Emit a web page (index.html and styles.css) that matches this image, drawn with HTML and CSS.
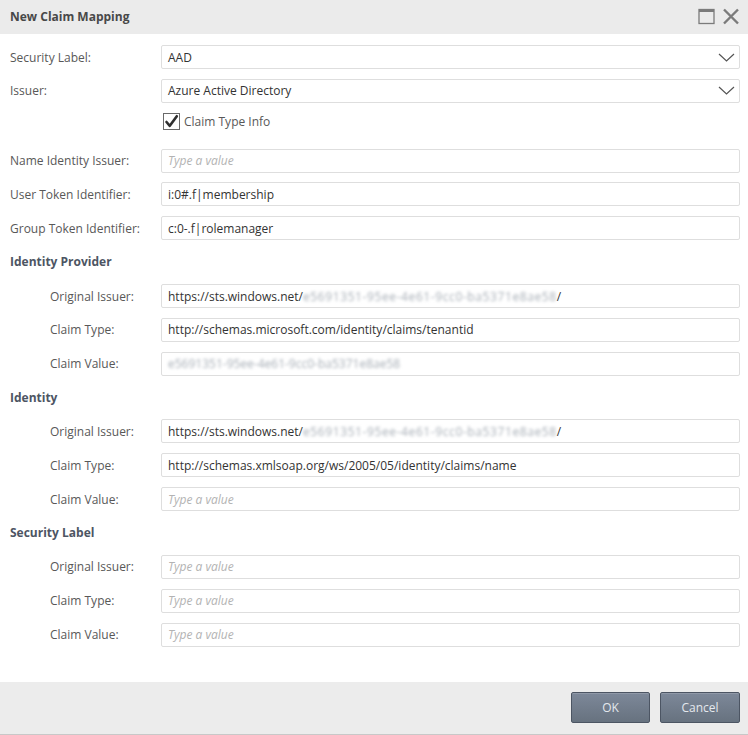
FILE: index.html
```html
<!DOCTYPE html>
<html lang="en">
<head>
<meta charset="utf-8">
<title>New Claim Mapping</title>
<link rel="stylesheet" href="styles.css">
</head>
<body>
<div class="dialog">
  <header class="titlebar">
    <span class="title">New Claim Mapping</span>
    <div class="tools">
      <svg class="icon-max" width="17" height="17" viewBox="0 0 17 17"><rect x="1" y="1.5" width="15" height="14" fill="none" stroke="#7b7b7b" stroke-width="1.3"/><rect x="1" y="1" width="15" height="3" fill="#7b7b7b"/></svg>
      <svg class="icon-close" width="18" height="17" viewBox="0 0 18 17"><path d="M2 1.5 L16 15.5 M16 1.5 L2 15.5" stroke="#7b7b7b" stroke-width="2.4" fill="none"/></svg>
    </div>
  </header>

  <main class="form">
    <div class="row">
      <span class="label">Security Label:</span>
      <div class="field select"><span class="val">AAD</span><svg class="chev" width="17" height="9" viewBox="0 0 17 9"><path d="M1 1 L8.5 8 L16 1" stroke="#555" stroke-width="1.2" fill="none"/></svg></div>
    </div>
    <div class="row">
      <span class="label">Issuer:</span>
      <div class="field select"><span class="val">Azure Active Directory</span><svg class="chev" width="17" height="9" viewBox="0 0 17 9"><path d="M1 1 L8.5 8 L16 1" stroke="#555" stroke-width="1.2" fill="none"/></svg></div>
    </div>
    <div class="row row-check">
      <span class="label"></span>
      <div class="check-wrap">
        <span class="checkbox"><svg width="15" height="15" viewBox="0 0 15 15"><path d="M2.5 8 L5.8 11.8 L12.8 2.2" stroke="#2f2f2f" stroke-width="2.6" fill="none" stroke-linecap="round" stroke-linejoin="round"/></svg></span>
        <span class="check-label">Claim Type Info</span>
      </div>
    </div>
    <div class="row">
      <span class="label">Name Identity Issuer:</span>
      <div class="field"><span class="ph">Type a value</span></div>
    </div>
    <div class="row">
      <span class="label">User Token Identifier:</span>
      <div class="field"><span class="val">i:0#.f|membership</span></div>
    </div>
    <div class="row">
      <span class="label">Group Token Identifier:</span>
      <div class="field"><span class="val">c:0-.f|rolemanager</span></div>
    </div>

    <div class="section">Identity Provider</div>
    <div class="row sub">
      <span class="label">Original Issuer:</span>
      <div class="field"><span class="val">https://sts.windows.net/<span class="blur wide">e5691351-95ee-4e61-9cc0-ba5371e8ae58</span>/</span></div>
    </div>
    <div class="row sub">
      <span class="label">Claim Type:</span>
      <div class="field"><span class="val">http://schemas.microsoft.com/identity/claims/tenantid</span></div>
    </div>
    <div class="row sub">
      <span class="label">Claim Value:</span>
      <div class="field"><span class="val"><span class="blur">e5691351-95ee-4e61-9cc0-ba5371e8ae58</span></span></div>
    </div>

    <div class="section">Identity</div>
    <div class="row sub">
      <span class="label">Original Issuer:</span>
      <div class="field"><span class="val">https://sts.windows.net/<span class="blur wide">e5691351-95ee-4e61-9cc0-ba5371e8ae58</span>/</span></div>
    </div>
    <div class="row sub">
      <span class="label">Claim Type:</span>
      <div class="field"><span class="val">http://schemas.xmlsoap.org/ws/2005/05/identity/claims/name</span></div>
    </div>
    <div class="row sub">
      <span class="label">Claim Value:</span>
      <div class="field"><span class="ph">Type a value</span></div>
    </div>

    <div class="section">Security Label</div>
    <div class="row sub">
      <span class="label">Original Issuer:</span>
      <div class="field"><span class="ph">Type a value</span></div>
    </div>
    <div class="row sub">
      <span class="label">Claim Type:</span>
      <div class="field"><span class="ph">Type a value</span></div>
    </div>
    <div class="row sub">
      <span class="label">Claim Value:</span>
      <div class="field"><span class="ph">Type a value</span></div>
    </div>
  </main>

  <footer class="footer">
    <button class="btn">OK</button>
    <button class="btn">Cancel</button>
  </footer>
</div>
</body>
</html>
```
FILE: styles.css
```css
* { box-sizing: border-box; }
html, body { margin: 0; padding: 0; }
body {
  width: 748px;
  height: 735px;
  font-family: "Open Sans", "Noto Sans", sans-serif;
  font-size: 12px;
  color: #555;
  background: #fff;
  overflow: hidden;
}
.dialog {
  width: 748px;
  height: 735px;
  display: flex;
  flex-direction: column;
}
.titlebar {
  height: 34px;
  flex: none;
  background: #ebebeb;
  display: flex;
  align-items: center;
  justify-content: space-between;
  padding: 0 8px 0 10px;
}
.title {
  font-weight: 700;
  color: #484848;
  font-size: 12px;
  margin-top: -2px;
}
.tools {
  display: flex;
  align-items: center;
  gap: 7px;
  margin-top: -1px;
}
.form {
  flex: 1;
  display: flex;
  flex-direction: column;
  gap: 9.86px;
  padding: 11px 8px 0 10px;
}
.row {
  display: grid;
  grid-template-columns: 151px 1fr;
  align-items: center;
  height: 24px;
}
.row.sub .label { padding-left: 40px; }
.label {
  color: #585858;
  white-space: nowrap;
}
.field {
  height: 24px;
  border: 1px solid #dedede;
  border-radius: 2px;
  display: flex;
  align-items: center;
  padding: 0 6px;
  color: #333;
  white-space: nowrap;
  overflow: hidden;
}
.field.select { justify-content: space-between; padding-right: 4px; }
.chev { display: block; }
.ph {
  font-style: italic;
  color: #b3b3b3;
}
.blur {
  color: #a7aeb6;
  filter: blur(1.4px);
}
.blur.wide { letter-spacing: 0.6px; }
.row-check {
  height: 26px;
  align-items: start;
}
.check-wrap {
  display: flex;
  align-items: center;
  gap: 4px;
  padding-left: 2px;
}
.checkbox {
  width: 17px;
  height: 17px;
  border: 1px solid #6a6a6a;
  background: #fff;
  display: flex;
  align-items: center;
  justify-content: center;
}
.checkbox svg { display: block; }
.check-label { color: #585858; }
.section {
  height: 24px;
  line-height: 24px;
  font-weight: 700;
  color: #4d5563;
}
.footer {
  height: 53px;
  flex: none;
  background: #ececec;
  border-bottom: 1px solid #c8c8c8;
  display: flex;
  justify-content: flex-end;
  align-items: flex-start;
  gap: 10px;
  padding: 10px 8px 0 0;
}
.btn {
  width: 79px;
  height: 31px;
  border: 1px solid #4c5563;
  border-radius: 2px;
  background: linear-gradient(#7d8899, #67727f);
  color: #e4e8ed;
  font-family: "Open Sans", "Noto Sans", sans-serif;
  font-size: 12px;
  padding: 0;
  box-shadow: inset 0 1px 0 rgba(255,255,255,0.15);
}
.btn + .btn { width: 80px; }
```
